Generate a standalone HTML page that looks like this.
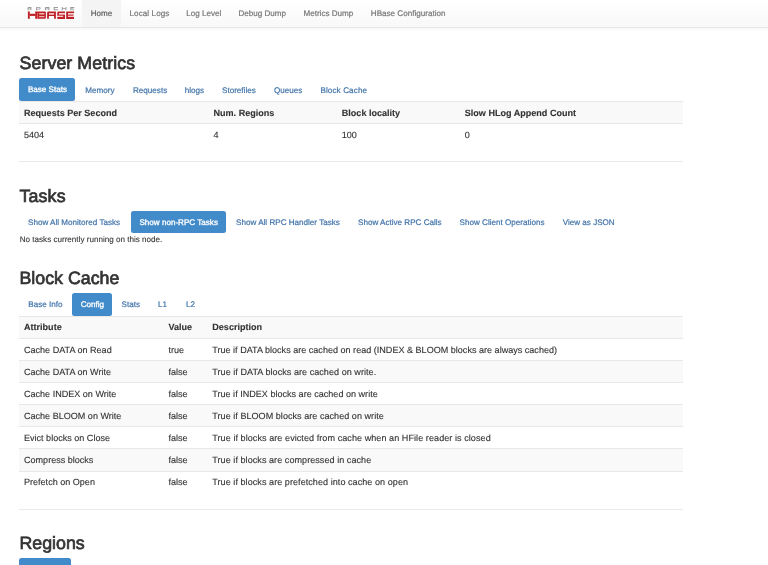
<!DOCTYPE html>
<html><head><meta charset="utf-8">
<style>
*{box-sizing:border-box;margin:0;padding:0}
html,body{width:768px;height:565px;overflow:hidden;background:#fff}
body{font-family:"Liberation Sans",sans-serif;color:#333;position:relative;will-change:transform;text-rendering:geometricPrecision}
.abs{position:absolute}
.navbar{position:absolute;left:0;top:0;width:768px;height:28px;
  background:linear-gradient(to bottom,#fff 0,#f8f8f8 100%);
  border-bottom:1px solid #e7e7e7;box-shadow:0 1px 3px rgba(0,0,0,.05)}
.nav a{position:absolute;top:0;height:27px;font-size:8.1px;line-height:1;color:#777;white-space:nowrap;-webkit-text-stroke:0.2px #777}
.nav a span{position:absolute;top:10px}
.nav a.active span{-webkit-text-stroke:0.2px #5f5f5f}
.nav a.active{background:linear-gradient(to bottom,#f3f3f3 0,#f5f5f5 100%)}
h1{position:absolute;left:19.5px;font-size:17.8px;font-weight:normal;line-height:1;color:#333;white-space:nowrap;
  -webkit-text-stroke:0.7px #333}
.pill{position:absolute;font-size:8.1px;line-height:1;color:#4274aa;white-space:nowrap;-webkit-text-stroke:0.2px #4274aa}
.btn{position:absolute;background:#428bca;border-radius:2.5px;color:#fff;font-size:8.1px;line-height:1;white-space:nowrap}
.btn span{position:absolute;-webkit-text-stroke:0.3px #fff}
.txt{position:absolute;font-size:8.1px;line-height:1;color:#333;white-space:nowrap;-webkit-text-stroke:0.1px #333}
.row{position:absolute;left:19px;width:664px;height:22.14px;border-top:1px solid #e8e8e8}
.row.odd{background:#f9f9f9}
.cell{position:absolute;font-size:9.05px;line-height:1;color:#333;white-space:nowrap;top:6.8px;-webkit-text-stroke:0.12px #333}
.cell.b{font-weight:bold}
.sep{position:absolute;left:19px;width:664px;height:1px;background:#ebebeb}
</style></head><body>

<div class="navbar">
  <svg class="abs" style="left:0;top:0" width="80" height="27" viewBox="0 0 80 27">
    <g fill="#9a9a9a" stroke="none">
      <path d="M27.6 10.2v-2.4l0.8-0.8h3v3.2h-1v-1h-1.8v1zM28.6 7.9v0.6h1.8v-0.6z" fill-rule="evenodd"/>
      <path d="M36.1 10.2v-3.2h3.7l0.8 0.8v1l-0.8 0.6h-2.7v0.8zM37.1 7.8v0.9h2.5v-0.9z" fill-rule="evenodd"/>
      <path d="M44.9 10.2v-2.4l0.8-0.8h3.7v3.2h-1v-1h-2.5v1zM45.9 7.9v0.6h2.5v-0.6z" fill-rule="evenodd"/>
      <path d="M53.7 10.2v-3.2h4.2v0.9h-3.2v1.4h3.2v0.9z"/>
      <path d="M61.8 10.2v-3.2h1v1.2h2.6v-1.2h1v3.2h-1v-1.1h-2.6v1.1z"/>
      <path d="M70.3 10.2v-3.2h3.9v0.9h-2.9v0.5h2.6v0.8h-2.6v0.5h2.9v0.5z"/>
    </g>
    <g fill="#bd2126">
      <rect x="27.9" y="11.4" width="1.9" height="7.4"/>
      <rect x="29.6" y="13.8" width="5.8" height="2.1"/>
      <path d="M35.2 11.4h9.7q1 0 1 1v5.4q0 1-1 1h-9.7z"/>
      <path d="M47.1 18.8v-6q0-1.4 1.4-1.4h7.4v7.4h-1.8v-2.8h-5.2v2.8z"/>
      <path d="M58.5 11.5h6.5v1.4h-6.1v1.7h6.1v4.3h-6.7q-1.1 0-1.1-1v-0.8h5.9v-1.3h-5.9v-2.9q0-1.4 1.3-1.4z"/>
      <path d="M66.2 11.5h7.8v1.4h-6v1.7h5.5v1.2h-5.5v1.3h6v1.8h-7.8z"/>
    </g>
    <g fill="#f2b3b3">
      <rect x="39.1" y="13.0" width="5.3" height="1.5"/>
      <rect x="39.1" y="16.0" width="5.3" height="1.2"/>
      <rect x="37.2" y="12.9" width="0.8" height="5.9" fill="#e47a7a"/>
      <rect x="49.0" y="13.0" width="5.1" height="1.9"/>
      <rect x="59.0" y="13.0" width="6" height="1.5" opacity="0.6"/>
      <rect x="57.2" y="15.9" width="6" height="1.1" opacity="0.6"/>
      <rect x="68" y="13.0" width="6" height="1.5" opacity="0.6"/>
      <rect x="68" y="15.9" width="6" height="1.1" opacity="0.6"/>
    </g>
  </svg>
  <div class="nav">
    <a class="active" style="left:82px;width:39px"><span style="left:8.7px;color:#5f5f5f">Home</span></a>
    <a style="left:121px;width:57px"><span style="left:8.5px;letter-spacing:0.08px">Local Logs</span></a>
    <a style="left:178px;width:52px"><span style="left:8.25px">Log Level</span></a>
    <a style="left:230px;width:65px"><span style="left:8.4px">Debug Dump</span></a>
    <a style="left:295px;width:68px"><span style="left:8.4px">Metrics Dump</span></a>
    <a style="left:362px;width:92px"><span style="left:8.8px">HBase Configuration</span></a>
  </div>
</div>

<!-- Server Metrics -->
<h1 style="top:55px;letter-spacing:0.08px">Server Metrics</h1>
<div class="btn" style="left:19.3px;top:78.3px;width:56px;height:22.8px"><span style="left:8.6px;top:7.9px">Base Stats</span></div>
<div class="pill" style="left:85.3px;top:86.7px">Memory</div>
<div class="pill" style="left:133px;top:86.7px">Requests</div>
<div class="pill" style="left:184.8px;top:86.7px">hlogs</div>
<div class="pill" style="left:222px;top:86.7px">Storefiles</div>
<div class="pill" style="left:274px;top:86.7px">Queues</div>
<div class="pill" style="left:320.4px;top:86.7px;letter-spacing:0.12px">Block Cache</div>

<div class="row odd" style="top:101.2px;height:22.1px">
  <div class="cell b" style="left:5px">Requests Per Second</div>
  <div class="cell b" style="left:194.5px">Num. Regions</div>
  <div class="cell b" style="left:322.8px">Block locality</div>
  <div class="cell b" style="left:445.8px">Slow HLog Append Count</div>
</div>
<div class="row" style="top:123.3px">
  <div class="cell" style="left:5px">5404</div>
  <div class="cell" style="left:194.5px">4</div>
  <div class="cell" style="left:322.8px">100</div>
  <div class="cell" style="left:445.8px">0</div>
</div>
<div class="sep" style="top:161.3px"></div>

<!-- Tasks -->
<h1 style="top:187.5px;letter-spacing:0.15px">Tasks</h1>
<div class="pill" style="left:28px;top:218.5px">Show All Monitored Tasks</div>
<div class="btn" style="left:131px;top:211.2px;width:95.4px;height:21.8px"><span style="left:8.4px;top:7.6px">Show non-RPC Tasks</span></div>
<div class="pill" style="left:236.1px;top:218.5px">Show All RPC Handler Tasks</div>
<div class="pill" style="left:358px;top:218.5px">Show Active RPC Calls</div>
<div class="pill" style="left:459.6px;top:218.5px">Show Client Operations</div>
<div class="pill" style="left:562.7px;top:218.5px">View as JSON</div>
<div class="txt" style="left:19.7px;top:235.5px">No tasks currently running on this node.</div>

<!-- Block Cache -->
<h1 style="top:270px">Block Cache</h1>
<div class="pill" style="left:28.3px;top:300.8px">Base Info</div>
<div class="btn" style="left:72.2px;top:293.1px;width:39.8px;height:22.8px"><span style="left:8.5px;top:7.7px">Config</span></div>
<div class="pill" style="left:121.5px;top:300.8px">Stats</div>
<div class="pill" style="left:158px;top:300.8px">L1</div>
<div class="pill" style="left:186px;top:300.8px">L2</div>

<div class="row odd" style="top:315.6px">
  <div class="cell b" style="left:5px">Attribute</div>
  <div class="cell b" style="left:149.5px">Value</div>
  <div class="cell b" style="left:193.3px">Description</div>
</div>
<div class="row" style="top:337.74px">
  <div class="cell" style="left:5px">Cache DATA on Read</div>
  <div class="cell" style="left:149.5px">true</div>
  <div class="cell" style="left:193.3px;letter-spacing:0.006px">True if DATA blocks are cached on read (INDEX &amp; BLOOM blocks are always cached)</div>
</div>
<div class="row odd" style="top:359.88px">
  <div class="cell" style="left:5px">Cache DATA on Write</div>
  <div class="cell" style="left:149.5px">false</div>
  <div class="cell" style="left:193.3px;letter-spacing:0.042px">True if DATA blocks are cached on write.</div>
</div>
<div class="row" style="top:382.02px">
  <div class="cell" style="left:5px">Cache INDEX on Write</div>
  <div class="cell" style="left:149.5px">false</div>
  <div class="cell" style="left:193.3px;letter-spacing:0.008px">True if INDEX blocks are cached on write</div>
</div>
<div class="row odd" style="top:404.16px">
  <div class="cell" style="left:5px">Cache BLOOM on Write</div>
  <div class="cell" style="left:149.5px">false</div>
  <div class="cell" style="left:193.3px;letter-spacing:0.035px">True if BLOOM blocks are cached on write</div>
</div>
<div class="row" style="top:426.3px">
  <div class="cell" style="left:5px">Evict blocks on Close</div>
  <div class="cell" style="left:149.5px">false</div>
  <div class="cell" style="left:193.3px;letter-spacing:0.062px">True if blocks are evicted from cache when an HFile reader is closed</div>
</div>
<div class="row odd" style="top:448.44px">
  <div class="cell" style="left:5px">Compress blocks</div>
  <div class="cell" style="left:149.5px">false</div>
  <div class="cell" style="left:193.3px;letter-spacing:0.05px">True if blocks are compressed in cache</div>
</div>
<div class="row" style="top:470.58px">
  <div class="cell" style="left:5px">Prefetch on Open</div>
  <div class="cell" style="left:149.5px">false</div>
  <div class="cell" style="left:193.3px;letter-spacing:0.052px">True if blocks are prefetched into cache on open</div>
</div>
<div class="sep" style="top:509.3px"></div>

<!-- Regions -->
<h1 style="top:534.8px">Regions</h1>
<div class="btn" style="left:19.2px;top:557.9px;width:51.6px;height:22px"></div>

</body></html>
